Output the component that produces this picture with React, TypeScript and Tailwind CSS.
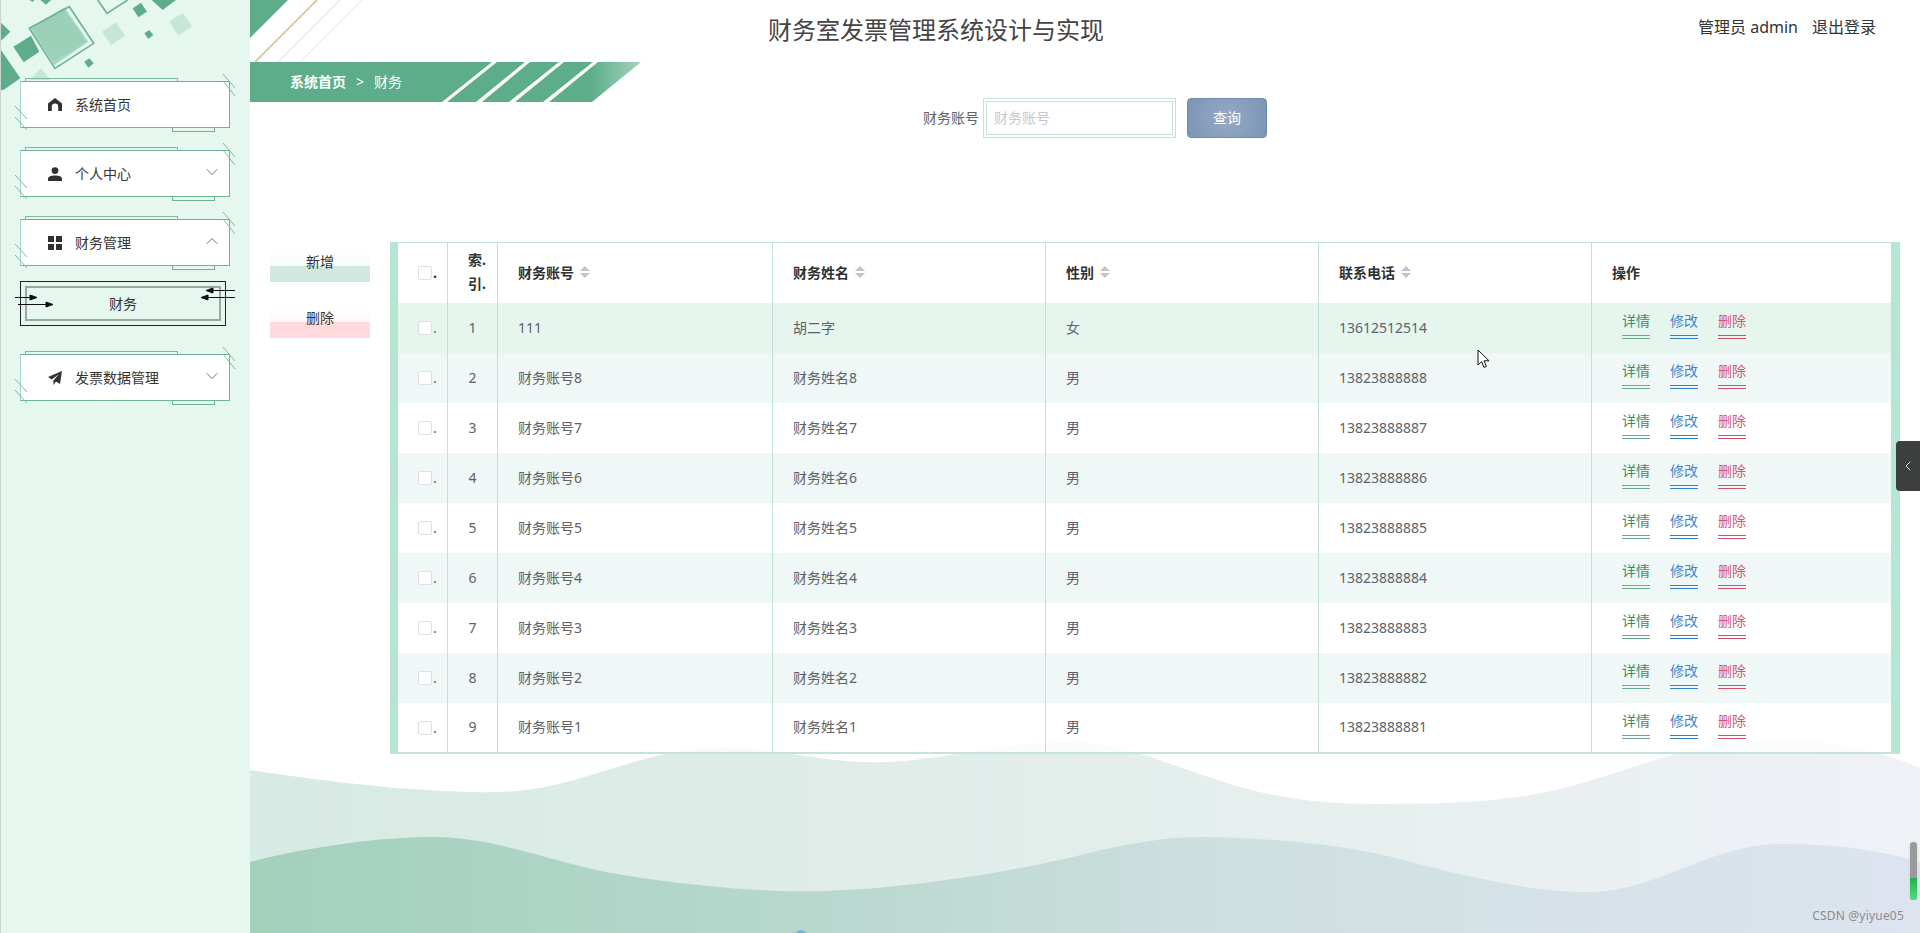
import { ChevronDown, ChevronUp, ChevronLeft } from 'lucide-react';

const rows = [
  { id: 1, account: '111', name: '胡二字', sex: '女', phone: '13612512514' },
  { id: 2, account: '财务账号8', name: '财务姓名8', sex: '男', phone: '13823888888' },
  { id: 3, account: '财务账号7', name: '财务姓名7', sex: '男', phone: '13823888887' },
  { id: 4, account: '财务账号6', name: '财务姓名6', sex: '男', phone: '13823888886' },
  { id: 5, account: '财务账号5', name: '财务姓名5', sex: '男', phone: '13823888885' },
  { id: 6, account: '财务账号4', name: '财务姓名4', sex: '男', phone: '13823888884' },
  { id: 7, account: '财务账号3', name: '财务姓名3', sex: '男', phone: '13823888883' },
  { id: 8, account: '财务账号2', name: '财务姓名2', sex: '男', phone: '13823888882' },
  { id: 9, account: '财务账号1', name: '财务姓名1', sex: '男', phone: '13823888881' },
];

const gridCols = 'grid grid-cols-[50px_50px_275px_273px_273px_273px_299px]';

function HomeIcon() {
  return (
    <svg width="14" height="14" viewBox="0 0 14 14" fill="#303133">
      <path d="M7 0L14 5.6V13H10.2V8.6A3.2 3.2 0 0 0 3.8 8.6V13H0V5.6Z" />
    </svg>
  );
}

function UserIcon() {
  return (
    <svg width="14" height="14" viewBox="0 0 14 14" fill="#303133">
      <circle cx="7" cy="3.6" r="3.4" />
      <path d="M0 14V11.8C0 9.6 3 8.6 7 8.6S14 9.6 14 11.8V14Z" />
    </svg>
  );
}

function GridIcon() {
  return (
    <svg width="14" height="14" viewBox="0 0 14 14" fill="#303133">
      <rect x="0" y="0" width="6" height="6" />
      <rect x="8" y="0" width="6" height="6" />
      <rect x="0" y="8" width="6" height="6" />
      <rect x="8" y="8" width="6" height="6" />
    </svg>
  );
}

function PlaneIcon() {
  return (
    <svg width="14" height="14" viewBox="0 0 14 14" fill="#303133">
      <path d="M14 0L0 6L3.8 8.4L11 3L5.4 9.4V14L8 10.6L12 13Z" />
    </svg>
  );
}

function MenuItem({ icon, label, chevron }: { icon: React.ReactNode; label: string; chevron?: 'up' | 'down' }) {
  return (
    <div className="relative w-[210px] h-[47px]">
      <div className="absolute left-[5px] -top-[3px] w-[153px] h-[6px] border border-[#7db89f]" />
      <div className="absolute left-[152px] -bottom-[4px] w-[43px] h-[8px] border border-[#6fb396]" />
      <svg className="absolute -left-[5px] -top-[7px] z-20" width="222" height="62" viewBox="0 0 222 62" fill="none" stroke="#7db89f" strokeWidth="1">
        <path d="M208 0L220 14M208 7L220 22M0 32L12 45M0 43L12 56" />
      </svg>
      <div className="relative z-10 h-full flex items-center pl-[27px] pr-[7px] bg-white border border-[#6fb396] border-l-[#a5d6c1] text-[14px] text-[#333]">
        <span className="w-[14px] h-[14px] flex">{icon}</span>
        <span className="ml-[13px]">{label}</span>
        {chevron === 'down' && <ChevronDown size={20} strokeWidth={1} className="ml-auto -mt-[3px] text-[#555]" />}
        {chevron === 'up' && <ChevronUp size={20} strokeWidth={1} className="ml-auto -mt-[3px] text-[#555]" />}
      </div>
    </div>
  );
}

function SortCaret() {
  return (
    <svg width="10" height="12" viewBox="0 0 10 12" fill="#c0c4cc" className="ml-[6px]">
      <path d="M5 0L10 5H0Z" />
      <path d="M5 12L0 7H10Z" />
    </svg>
  );
}

function OpLink({ text, textClass, lineClass }: { text: string; textClass: string; lineClass: string }) {
  return (
    <span className={`mx-[10px] w-[28px] h-[36px] pt-[8px] leading-[20px] text-[14px] border-b-4 border-double whitespace-nowrap ${textClass} ${lineClass}`}>
      {text}
    </span>
  );
}

function Checkbox() {
  return (
    <span className="flex items-end text-[14px] leading-[14px] ml-[20px]">
      <span className="block w-[14px] h-[14px] rounded-[2px] border border-[#dcdfe6] bg-white" />
      <span className="pl-[1px]">.</span>
    </span>
  );
}

export default function App() {
  return (
    <div className="relative flex w-[1920px] h-[933px] overflow-hidden bg-white font-['Noto_Sans','Noto_Sans_CJK_SC',sans-serif]">
      {/* sidebar */}
      <aside className="relative w-[250px] shrink-0 h-full bg-[#e6f7f0] border-l border-[#c9d6d0] pl-[19px] pt-[81px]">
        <svg className="absolute left-0 top-0" width="250" height="90" viewBox="0 0 750 270">
          <path d="M0 68L28 95L0 122Z" fill="#5dad8a" />
          <path d="M0 150L58 235L0 275Z" fill="#5dad8a" />
          <path d="M37 140L90 107L115 155L68 187Z" fill="#5dad8a" />
          <path d="M85 85L190 22L262 125L160 195Z" fill="#a6d6c0" />
          <path d="M95 85L190 30L255 125L155 185Z" fill="#9bd1b8" />
          <path d="M85 85L205 20L278 130L162 205Z" fill="none" stroke="#6fb396" strokeWidth="5" />
          <path d="M250 185L265 175L278 190L262 203Z" fill="#5dad8a" />
          <path d="M303 95L345 67L372 107L330 135Z" fill="#c6e6d8" />
          <path d="M505 65L545 38L573 78L532 107Z" fill="#c6e6d8" />
          <path d="M85 240L120 205L148 240Z" fill="#c6e6d8" />
          <path d="M395 25L420 8L438 35L412 52Z" fill="#5dad8a" />
          <path d="M430 100L445 90L457 105L442 117Z" fill="#5dad8a" />
          <path d="M290 0L318 40L380 0" fill="none" stroke="#6fb396" strokeWidth="5" />
          <path d="M452 0L485 30L525 0Z" fill="#5dad8a" />
          <path d="M118 0L135 14L150 0Z" fill="#5dad8a" />
          <path d="M85 0L95 6L100 0Z" fill="#5dad8a" />
        </svg>

        <div className="relative">
          <MenuItem icon={<HomeIcon />} label="系统首页" />
          <div className="mt-[22px]">
            <MenuItem icon={<UserIcon />} label="个人中心" chevron="down" />
          </div>
          <div className="mt-[22px]">
            <MenuItem icon={<GridIcon />} label="财务管理" chevron="up" />
          </div>
          <div className="relative mt-[15px] w-[206px] h-[45px] border border-[#222] p-[4px]">
            <div className="h-full border-2 border-[#9aa9a2] flex items-center justify-center text-[14px] text-[#333]">财务</div>
            <svg className="absolute -left-[6px] top-0" width="222" height="30" viewBox="0 0 222 30" fill="#111" stroke="#111" strokeWidth="1">
              <path d="M0 15.5H22M3 22.5H38" />
              <path d="M22 15.5L15 13V18ZM38 22.5L31 20V25Z" />
              <path d="M220 8.5H191M220 15.5H186" />
              <path d="M191 8.5L198 6V11ZM186 15.5L193 13V18Z" />
            </svg>
          </div>
          <div className="mt-[28px]">
            <MenuItem icon={<PlaneIcon />} label="发票数据管理" chevron="down" />
          </div>
        </div>
      </aside>

      {/* main */}
      <main className="relative flex-1 min-w-0 h-full">
        <svg className="absolute left-0 bottom-0 w-[1670px] h-[200px]" viewBox="250 733 1670 200" preserveAspectRatio="none">
          <defs>
            <linearGradient id="waveBack" x1="0" x2="1" y1="0" y2="0">
              <stop offset="0" stopColor="#d7eae3" />
              <stop offset="0.5" stopColor="#e3eeeb" />
              <stop offset="1" stopColor="#eff1f7" />
            </linearGradient>
            <linearGradient id="waveFront" x1="0" x2="1" y1="0" y2="0">
              <stop offset="0" stopColor="#a2d0bb" />
              <stop offset="0.35" stopColor="#b9d8cf" />
              <stop offset="0.6" stopColor="#cfe0e1" />
              <stop offset="1" stopColor="#dde4ef" />
            </linearGradient>
          </defs>
          <path
            d="M250 770C340 784 450 796 516 791C590 785 650 745 729 747C780 748 830 765 889 762C950 759 1020 738 1085 743C1130 746 1170 765 1218 780C1270 798 1320 804 1378 804C1450 804 1510 802 1564 788C1640 768 1700 738 1772 739C1830 740 1880 750 1920 768V933H250Z"
            fill="url(#waveBack)"
          />
          <path
            d="M250 862C310 846 390 836 436 837C500 838 560 865 623 875C690 886 770 893 825 891C900 888 1000 875 1085 854C1130 843 1165 837 1202 837C1270 838 1345 844 1404 860C1470 878 1540 893 1591 892C1660 890 1710 845 1777 844C1830 843 1880 850 1920 862V933H250Z"
            fill="url(#waveFront)"
          />
        </svg>

        <svg className="absolute left-0 top-0" width="120" height="62" viewBox="250 0 120 62" fill="none">
          <path d="M250 0H288L250 38Z" fill="#5dad8a" />
          <path d="M255 62L317 0" stroke="#d6cf96" strokeWidth="2" />
          <path d="M278 62L340 0" stroke="#dddddd" strokeWidth="1" />
          <path d="M300 62L362 0" stroke="#e6e6e6" strokeWidth="1" />
        </svg>

        <div className="relative">
          <header className="h-[62px] flex justify-between pl-[518px] pr-[44px]">
            <h1 className="text-[24px] leading-[36px] mt-[12px] text-[#444]">财务室发票管理系统设计与实现</h1>
            <div className="text-[16px] leading-[24px] mt-[15px] text-[#333] whitespace-nowrap">
              <span>管理员 admin</span>
              <span className="ml-[14px]">退出登录</span>
            </div>
          </header>

          <div className="relative w-[391px] h-[40px]">
            <svg className="absolute left-0 top-0" width="391" height="40" viewBox="0 0 391 40">
              <defs>
                <linearGradient id="crumb" x1="0" x2="1" y1="0" y2="0">
                  <stop offset="0.87" stopColor="#5dad8a" />
                  <stop offset="1" stopColor="#a3d3bc" />
                </linearGradient>
              </defs>
              <path d="M0 0H391L342 40H0Z" fill="url(#crumb)" />
              <g fill="#ffffff">
                <path d="M242 0H247L197 40H192Z" />
                <path d="M275 0H280L232 40H226Z" />
                <path d="M309 0H314L265 40H259Z" />
                <path d="M343 0H348L299 40H293Z" />
              </g>
            </svg>
            <div className="relative h-full flex items-center pb-[2px] pl-[40px] text-[14px] text-white">
              <span className="font-bold">系统首页</span>
              <span className="mx-[10px]">&gt;</span>
              <span>财务</span>
            </div>
          </div>

          <div className="-mt-[4px] flex items-center pl-[673px]">
            <span className="pb-[2px] text-[14px] text-[#606266]">财务账号</span>
            <input
              placeholder="财务账号"
              className="ml-[4px] w-[193px] h-[40px] border-4 border-double border-[#c3e2d7] bg-white px-[7px] pb-[2px] text-[14px] outline-none placeholder:text-[#c5c8d0]"
            />
            <button className="ml-[11px] w-[80px] h-[40px] pb-[2px] rounded-[4px] border border-[#7189a8] bg-[radial-gradient(circle,#95a9c5,#7b95b5)] text-[14px] text-white">
              查询
            </button>
          </div>

          <div className="mt-[104px] flex pl-[20px]">
            <div className="w-[100px] pt-[8px]">
              <div className="h-[32px] pt-[2px] leading-[20px] text-center text-[14px] text-[#333] bg-[linear-gradient(180deg,#ffffff_0%,#f5fbfd_50%,#d1e8df_50%,#d1e8df_100%)]">
                新增
              </div>
              <div className="mt-[24px] h-[32px] pt-[2px] leading-[20px] text-center text-[14px] text-[#333] bg-[linear-gradient(180deg,#ffffff_0%,#fef8fb_50%,#ffd9dc_50%,#ffd9dc_100%)]">
                删除
              </div>
            </div>

            <div className="ml-[20px] w-[1510px] border-t border-b-2 border-l-8 border-r-[9px] border-t-[#bfe3d6] border-b-[#c5e3da] border-x-[#b5e6d2]">
              <div className={`${gridCols} h-[60px] bg-white text-[14px] font-bold text-[#303133]`}>
                <div className="flex items-center border-r border-[#bfe3d6]"><Checkbox /></div>
                <div className="flex items-center pl-[20px] pb-[2px] border-r border-[#bfe3d6] leading-[24px]">索.<br />引.</div>
                <div className="flex items-center pl-[20px] pb-[2px] border-r border-[#bfe3d6]">财务账号<SortCaret /></div>
                <div className="flex items-center pl-[20px] pb-[2px] border-r border-[#bfe3d6]">财务姓名<SortCaret /></div>
                <div className="flex items-center pl-[20px] pb-[2px] border-r border-[#bfe3d6]">性别<SortCaret /></div>
                <div className="flex items-center pl-[20px] pb-[2px] border-r border-[#bfe3d6]">联系电话<SortCaret /></div>
                <div className="flex items-center pl-[20px] pb-[2px]">操作</div>
              </div>
              {rows.map((r, i) => (
                <div
                  key={r.id}
                  className={`${gridCols} ${i === 8 ? 'h-[49px]' : 'h-[50px]'} text-[14px] text-[#606266] ${
                    i === 0 ? 'bg-[#e6f6ef]' : i % 2 === 1 ? 'bg-[#eff8f6]' : 'bg-white/80'
                  }`}
                >
                  <div className="flex items-center border-r border-[#bfe3d6]"><Checkbox /></div>
                  <div className="flex items-center justify-center pb-[2px] border-r border-[#bfe3d6]">{r.id}</div>
                  <div className="flex items-center pl-[20px] pb-[2px] border-r border-[#bfe3d6]">{r.account}</div>
                  <div className="flex items-center pl-[20px] pb-[2px] border-r border-[#bfe3d6]">{r.name}</div>
                  <div className="flex items-center pl-[20px] pb-[2px] border-r border-[#bfe3d6]">{r.sex}</div>
                  <div className="flex items-center pl-[20px] pb-[2px] border-r border-[#bfe3d6]">{r.phone}</div>
                  <div className="flex pl-[20px]">
                    <OpLink text="详情" textClass="text-[#3f8f6a]" lineClass="border-[#66ab8c]" />
                    <OpLink text="修改" textClass="text-[#3f86d0]" lineClass="border-[#2f82c9]" />
                    <OpLink text="删除" textClass="text-[#d4566f]" lineClass="border-[#d0506a]" />
                  </div>
                </div>
              ))}
            </div>
          </div>
        </div>

        <span className="absolute left-[545px] -bottom-[9px] w-[12px] h-[12px] rounded-full bg-[#6fb7e0]" />
      </main>

      {/* floating bits */}
      <div className="absolute right-0 top-[441px] w-[24px] h-[50px] rounded-l-[4px] bg-[#3d3f3e] flex items-center justify-center">
        <ChevronLeft size={16} strokeWidth={1.25} className="text-white" />
      </div>
      <div className="absolute right-[3px] top-[842px] w-[7px] h-[58px] rounded-full overflow-hidden bg-[#9a9a9a] shadow-[0_0_2px_#c8c8c8]">
        <div className="mt-[36px] h-[22px] bg-[linear-gradient(180deg,#1fae52,#4fe07c)]" />
      </div>
      <span className="absolute right-[16px] top-[907px] text-[12px] leading-[18px] tracking-[0.2px] text-[#8c8c8c]">CSDN @yiyue05</span>
      <svg className="absolute left-[1477px] top-[349px]" width="14" height="20" viewBox="0 0 14 20">
        <path d="M1 1V16L4.6 12.6L7 18.4L9.4 17.4L7 11.8H12Z" fill="#ffffff" stroke="#111111" strokeWidth="1" />
      </svg>
    </div>
  );
}
